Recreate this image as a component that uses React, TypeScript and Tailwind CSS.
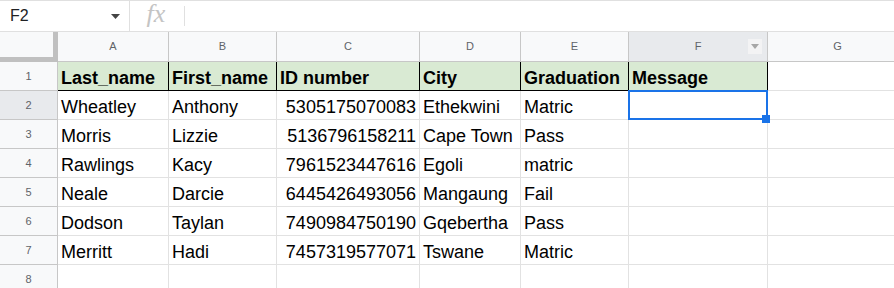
import React from "react";

const widths = [111, 108, 143, 101, 108, 139, 140];
const letters = ["A", "B", "C", "D", "E", "F", "G"];
const headers = ["Last_name", "First_name", "ID number", "City", "Graduation", "Message"];
const rows = [
  ["Wheatley", "Anthony", "5305175070083", "Ethekwini", "Matric"],
  ["Morris", "Lizzie", "5136796158211", "Cape Town", "Pass"],
  ["Rawlings", "Kacy", "7961523447616", "Egoli", "matric"],
  ["Neale", "Darcie", "6445426493056", "Mangaung", "Fail"],
  ["Dodson", "Taylan", "7490984750190", "Gqebertha", "Pass"],
  ["Merritt", "Hadi", "7457319577071", "Tswane", "Matric"],
];

const font = { fontFamily: '"Liberation Sans", Arial, sans-serif' };

function RowHead({ n, active }: { n: number; active?: boolean }) {
  return (
    <div
      className={`w-[58px] shrink-0 h-full flex items-center justify-center border-r border-b border-[#c7c7c7] text-[11px] text-[#5f6368] ${
        active ? "bg-[#e8eaed]" : "bg-[#f8f9fa]"
      }`}
    >
      {n}
    </div>
  );
}

export default function App() {
  return (
    <div className="w-[894px] h-[288px] overflow-hidden bg-white" style={font}>
      {/* formula bar */}
      <div className="h-[32px] flex items-stretch border-t border-b border-[#e0e0e0] bg-white">
        <div className="w-[130px] shrink-0 flex items-center pl-[10px] pr-[9px] border-r border-[#e0e0e0]">
          <span className="text-[16px] text-[#202124] flex-1">F2</span>
          <svg width="9" height="5" viewBox="0 0 9 5">
            <path d="M0 0 L9 0 L4.5 5 Z" fill="#444" />
          </svg>
        </div>
        <div className="w-[54px] shrink-0 flex items-center justify-center">
          <span
            className="text-[26px] italic text-[#c4c4c4] leading-none -mt-[5px] -ml-[2px]"
            style={{ fontFamily: '"Liberation Serif", serif' }}
          >
            fx
          </span>
        </div>
        <div className="w-px bg-[#e0e0e0] my-[5px]" />
        <div className="flex-1" />
      </div>

      {/* column headers */}
      <div className="h-[30px] flex">
        <div className="w-[58px] shrink-0 h-full bg-[#f8f9fa] border-r-[5px] border-b-[5px] border-[#c0c0c0]" />
        {letters.map((l, i) => (
          <div
            key={l}
            style={{ width: widths[i] }}
            className={`shrink-0 h-full relative flex items-center justify-center border-r border-b border-[#c7c7c7] text-[11px] text-[#5f6368] ${
              l === "F" ? "bg-[#e8eaed]" : "bg-[#f8f9fa]"
            }`}
          >
            {l}
            {l === "F" && (
              <div className="absolute right-[5px] top-[7px] w-[14px] h-[15px] bg-[#f3f3f4] flex items-center justify-center">
                <svg width="8" height="5" viewBox="0 0 8 5">
                  <path d="M0 0 L8 0 L4 5 Z" fill="#a6a6a6" />
                </svg>
              </div>
            )}
          </div>
        ))}
      </div>

      {/* row 1 header */}
      <div className="h-[29px] flex">
        <RowHead n={1} />
        {widths.map((w, i) => (
          <div
            key={i}
            style={{ width: w }}
            className={`shrink-0 h-full flex items-end pl-[3px] pb-[1px] whitespace-nowrap overflow-hidden text-[18px] leading-[21px] font-bold text-black ${
              i < 6 ? "bg-[#d9ead3] border-r border-b border-black" : "border-r border-b border-[#e2e2e2]"
            }`}
          >
            {headers[i] ?? ""}
          </div>
        ))}
      </div>

      {rows.map((r, ri) => (
        <div key={ri} className="h-[29px] flex">
          <RowHead n={ri + 2} active={ri === 0} />
          {widths.map((w, i) => (
            <div
              key={i}
              style={{ width: w }}
              className={`shrink-0 h-full relative flex items-end pb-[1px] whitespace-nowrap text-[18px] leading-[21px] text-black border-r border-b border-[#e2e2e2] ${
                i === 2 ? "justify-end pr-[3px]" : "pl-[3px]"
              }`}
            >
              {r[i] ?? ""}
              {ri === 0 && i === 5 && (
                <div className="absolute -left-[1px] -top-[1px] -right-[1px] -bottom-[1px] border-2 border-[#1a73e8] z-10">
                  <div className="absolute right-[-4px] bottom-[-5px] w-[8px] h-[8px] bg-[#1a73e8]" />
                </div>
              )}
            </div>
          ))}
        </div>
      ))}

      {/* row 8 */}
      <div className="h-[29px] flex">
        <RowHead n={8} />
        {widths.map((w, i) => (
          <div key={i} style={{ width: w }} className="shrink-0 h-full border-r border-b border-[#e2e2e2]" />
        ))}
      </div>
    </div>
  );
}
